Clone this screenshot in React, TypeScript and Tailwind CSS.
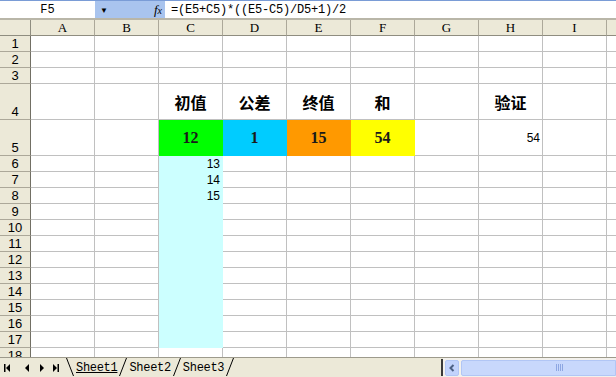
import React from "react";

const cols = ["A", "B", "C", "D", "E", "F", "G", "H", "I", "J"];

const rowHeights: number[] = [16, 16, 16, 36, 36, 16, 16, 16, 16, 16, 16, 16, 16, 16, 16, 16, 16, 16];

type Cell = { text?: string; bg?: string; kind?: "head" | "big" | "num" };

const cells: Record<string, Cell> = {
    C4: { text: "初值", kind: "head" },
    D4: { text: "公差", kind: "head" },
    E4: { text: "终值", kind: "head" },
    F4: { text: "和", kind: "head" },
    H4: { text: "验证", kind: "head" },
    C5: { text: "12", kind: "big", bg: "bg-[#00ff00]" },
    D5: { text: "1", kind: "big", bg: "bg-[#00ccff]" },
    E5: { text: "15", kind: "big", bg: "bg-[#ff9900]" },
    F5: { text: "54", kind: "big", bg: "bg-[#ffff00]" },
    H5: { text: "54", kind: "num" },
    C6: { text: "13", kind: "num" },
    C7: { text: "14", kind: "num" },
    C8: { text: "15", kind: "num" },
};

const lightCyan = (col: string, row: number) => col === "C" && row >= 6 && row <= 17;

const FormulaBar = () => (
    <div className="flex h-[20px] shrink-0 border-t border-[#7a9cd6] border-b-2 border-b-[#b9b6a8] bg-[#a9c4ee]">
        <div className="w-[95px] bg-white flex items-center justify-center font-['Liberation_Mono'] text-[12px] text-black">
            F5
        </div>
        <div className="w-[70px] flex items-center justify-between pl-[5px] pr-[3px]">
            <span className="text-[8px] leading-none text-black">▼</span>
            <span className="font-['Liberation_Serif'] italic text-[13px] leading-none text-black">
                f<span className="text-[10px]">x</span>
            </span>
        </div>
        <div className="flex-1 bg-white flex items-center pl-[6px] font-['Liberation_Mono'] text-[12px] tracking-[-0.2px] text-black">
            =(E5+C5)*((E5-C5)/D5+1)/2
        </div>
    </div>
);

const Grid = () => (
    <div className="flex-1 overflow-hidden">
        <div className="flex h-[16px]">
            <div className="w-[31px] shrink-0 bg-[#ece9d8] border-r border-b border-[#8f8d80]" />
            {cols.map((c) => (
                <div
                    key={c}
                    className="w-[64px] shrink-0 bg-[#ece9d8] border-r border-[#aca899] border-b border-b-[#8f8d80] flex items-center justify-center font-['Liberation_Serif'] text-[13px] text-black leading-none"
                >
                    {c === "J" ? "" : c}
                </div>
            ))}
        </div>
        {rowHeights.map((h, i) => {
            const row = i + 1;
            return (
                <div key={row} className="flex" style={{ height: h }}>
                    <div className="w-[31px] shrink-0 bg-[#ece9d8] border-r border-r-[#716f64] border-b border-[#aca899] flex items-end justify-center font-['Liberation_Sans'] text-[13px] leading-[15px] text-black">
                        {row}
                    </div>
                    {cols.map((c) => {
                        const cell = cells[c + row];
                        const bg = cell?.bg ?? (lightCyan(c, row) ? "bg-[#ccffff]" : "bg-white");
                        const filled = cell?.bg || lightCyan(c, row);
                        return (
                            <div
                                key={c}
                                className={`w-[64px] shrink-0 ${bg} border-r border-b ${filled ? "border-transparent" : "border-[#c0c0c0]"} flex items-center ${
                                    cell?.kind === "num" ? "justify-end pr-[2px]" : "justify-center"
                                }`}
                            >
                                {cell?.kind === "head" && (
                                    <span className="font-['Noto_Sans_CJK_SC',sans-serif] font-bold text-[16px] text-black">
                                        {cell.text}
                                    </span>
                                )}
                                {cell?.kind === "big" && (
                                    <span className="font-['Liberation_Serif'] font-bold text-[16px] text-[#1a1a1a]">
                                        {cell.text}
                                    </span>
                                )}
                                {cell?.kind === "num" && (
                                    <span className="font-['Liberation_Sans'] text-[12px] text-black">{cell.text}</span>
                                )}
                            </div>
                        );
                    })}
                </div>
            );
        })}
    </div>
);

const Slash = ({ back }: { back?: boolean }) => (
    <svg width="8" height="19" viewBox="0 0 8 19" className="shrink-0">
        {back ? (
            <line x1="0.5" y1="0" x2="7.5" y2="18" stroke="#000" strokeWidth="1" />
        ) : (
            <line x1="0.5" y1="18" x2="7.5" y2="0" stroke="#000" strokeWidth="1" />
        )}
    </svg>
);

const TabBar = () => (
    <div className="h-[20px] shrink-0 flex bg-[#ece9d8] border-t border-[#9d9a8c]">
        <div className="w-[441px] flex items-center">
            <div className="flex items-center w-[66px] pl-[4px] gap-0">
                <svg width="16" height="10" viewBox="0 0 16 10">
                    <rect x="0" y="1" width="1.5" height="8" fill="#000" />
                    <polygon points="6,1 2,5 6,9" fill="#000" />
                </svg>
                <svg width="16" height="10" viewBox="0 0 16 10">
                    <polygon points="9,1 5,5 9,9" fill="#000" />
                </svg>
                <svg width="16" height="10" viewBox="0 0 16 10">
                    <polygon points="4,1 8,5 4,9" fill="#000" />
                </svg>
                <svg width="14" height="10" viewBox="0 0 14 10">
                    <polygon points="1,1 5,5 1,9" fill="#000" />
                    <rect x="5.5" y="1" width="1.5" height="8" fill="#000" />
                </svg>
            </div>
            <Slash back />
            <span className="px-[2px] font-['Liberation_Mono'] text-[12px] tracking-[-0.3px] underline text-black">Sheet1</span>
            <Slash />
            <span className="px-[2px] font-['Liberation_Mono'] text-[12px] tracking-[-0.3px] text-black">Sheet2</span>
            <Slash />
            <span className="px-[2px] font-['Liberation_Mono'] text-[12px] tracking-[-0.3px] text-black">Sheet3</span>
            <Slash />
        </div>
        <div className="w-[2px] bg-[#3a3a3a] my-[1px]" />
        <div className="flex-1 flex items-center gap-[2px] pl-[2px] bg-[#f3f1ec]">
            <div className="w-[14px] h-[16px] rounded-[2px] bg-[#c2d3fc] border border-[#b1c6f5] flex items-center justify-center">
                <svg width="8" height="8" viewBox="0 0 8 8">
                    <polyline points="5.5,1 2.5,4 5.5,7" fill="none" stroke="#4d6185" strokeWidth="2" />
                </svg>
            </div>
            <div className="flex-1 h-[16px] rounded-l-[2px] bg-[#c8d8fc] border border-[#b1c6f5] flex items-center justify-center">
                <div className="flex gap-[1px] ml-[42px]">
                    {[0, 1, 2, 3].map((k) => (
                        <div key={k} className="w-[1px] h-[7px] bg-[#8ea7e2]" />
                    ))}
                </div>
            </div>
        </div>
    </div>
);

const App = () => {
    return (
        <div className="w-[616px] h-[377px] overflow-hidden bg-white flex flex-col">
            <FormulaBar />
            <Grid />
            <TabBar />
        </div>
    );
};

export default App;
